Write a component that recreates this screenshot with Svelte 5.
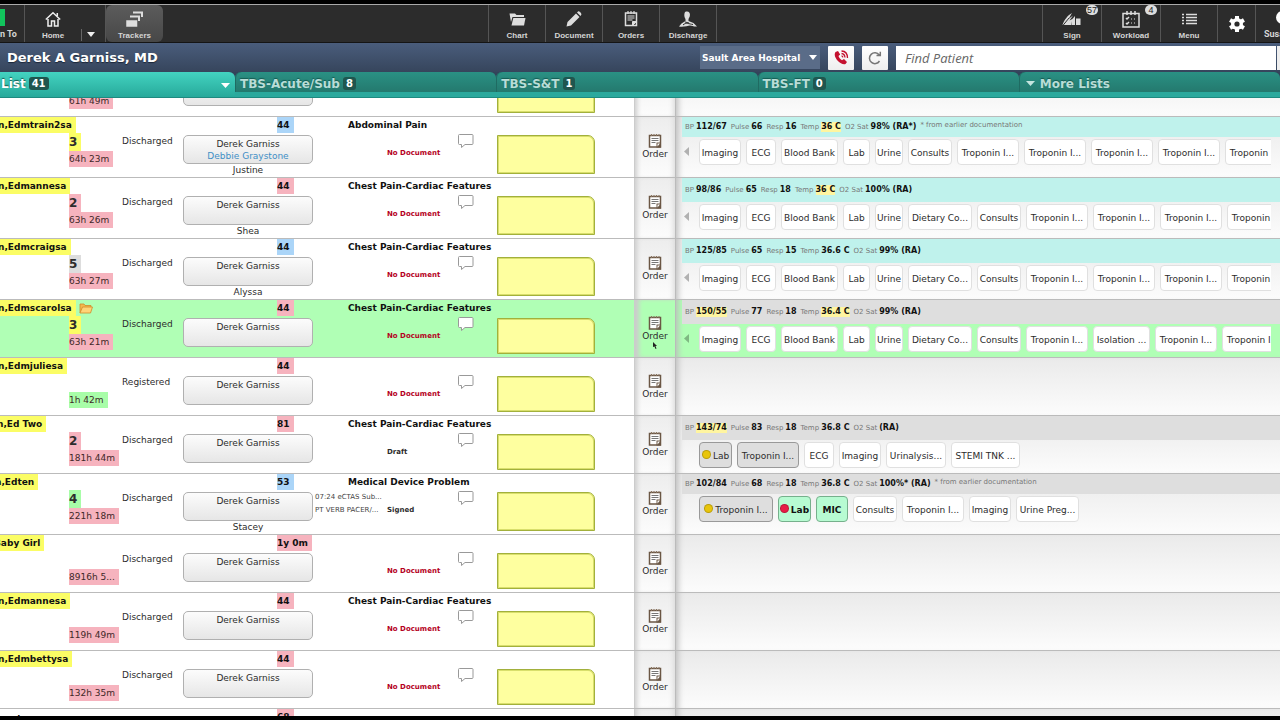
<script lang="ts">
  const widths: Record<string, number> = {
    'Imaging': 42, 'ECG': 30, 'Blood Bank': 57, 'Lab': 27, 'Urine': 28, 'Consults': 44,
    'Troponin I...': 62, 'Dietary Co...': 64, 'Isolation ...': 57, 'Urinalysis...': 60,
    'STEMI TNK ...': 69, 'Urine Preg...': 63, 'MIC': 32
  };
  const T = 'Troponin I...';
  const chipList = (names: string[]) => names.map((label) => ({ label, kind: '', dot: '' }));
  const base = ['Imaging', 'ECG', 'Blood Bank', 'Lab', 'Urine'];
  const standard = [...base, 'Dietary Co...', 'Consults', T, T, T, T];
  const vit = (bp: string, pulse: string, resp: string, temp: string, sat: string, hot: string[] = []) => [
    { k: 'BP', v: bp, hot: hot.includes('BP') },
    { k: 'Pulse', v: pulse, hot: false },
    { k: 'Resp', v: resp, hot: false },
    { k: 'Temp', v: temp, hot: hot.includes('Temp') },
    { k: 'O2 Sat', v: sat, hot: false }
  ];
  const blank = {
    name: '', cut: 2, plain: false, folder: false, esi: '', esiTone: '', time: '', timeTone: 'pink', status: 'Discharged',
    age: '44', ageTone: 'pink', second: '', nurse: '', complaint: '', notes: [] as string[], doc: 'No Document',
    vitals: [] as any[], band: '', earlier: false, chips: [] as any[], scroll: false, selected: false
  };
  const cardiac = 'Chest Pain-Cardiac Features';
  const rows = [
    { ...blank, name: 'n,Edmsa', time: '61h 49m' },
    { ...blank, name: 'n,Edmtrain2sa', esi: '3', esiTone: 'yellow', time: '64h 23m', ageTone: 'blue', second: 'Debbie Graystone', nurse: 'Justine',
      complaint: 'Abdominal Pain', vitals: vit('112/67', '66', '16', '36 C', '98% (RA*)', ['Temp']), band: 'aqua', earlier: true, scroll: true,
      chips: chipList([...base, 'Consults', T, T, T, T, T]) },
    { ...blank, name: 'n,Edmannesa', esi: '2', esiTone: 'pink', time: '63h 26m', nurse: 'Shea', complaint: cardiac,
      vitals: vit('98/86', '65', '18', '36 C', '100% (RA)', ['Temp']), band: 'aqua', scroll: true, chips: chipList(standard) },
    { ...blank, name: 'n,Edmcraigsa', esi: '5', esiTone: 'grey', time: '63h 27m', ageTone: 'blue', nurse: 'Alyssa', complaint: cardiac,
      vitals: vit('125/85', '65', '15', '36.6 C', '99% (RA)'), band: 'aqua', scroll: true, chips: chipList(standard) },
    { ...blank, name: 'n,Edmscarolsa', folder: true, esi: '3', esiTone: 'yellow', time: '63h 21m', complaint: cardiac, selected: true,
      vitals: vit('150/55', '77', '18', '36.4 C', '99% (RA)', ['BP', 'Temp']), band: 'silver', scroll: true,
      chips: chipList([...base, 'Dietary Co...', 'Consults', T, 'Isolation ...', T, T]) },
    { ...blank, name: 'n,Edmjuliesa', time: '1h 42m', timeTone: 'green', status: 'Registered' },
    { ...blank, name: 'n,Ed Two', cut: 3, esi: '2', esiTone: 'pink', time: '181h 44m', age: '81', complaint: cardiac, doc: 'Draft',
      vitals: vit('143/74', '83', '18', '36.8 C', '(RA)', ['BP']), band: 'silver',
      chips: [{ label: 'Lab', kind: 'held', dot: 'gold' }, { label: T, kind: 'held', dot: '' }, ...chipList(['ECG', 'Imaging', 'Urinalysis...', 'STEMI TNK ...'])] },
    { ...blank, name: 'n,Edten', cut: 5, esi: '4', esiTone: 'green', time: '221h 18m', age: '53', ageTone: 'blue', nurse: 'Stacey',
      complaint: 'Medical Device Problem', notes: ['07:24 eCTAS Sub...', 'PT VERB PACER/...'], doc: 'Signed',
      vitals: vit('102/84', '68', '18', '36.8 C', '100%* (RA)'), band: 'silver', earlier: true,
      chips: [{ label: T, kind: 'held', dot: 'gold' }, { label: 'Lab', kind: 'done', dot: 'red' }, { label: 'MIC', kind: 'done', dot: '' },
        ...chipList(['Consults', T, 'Imaging', 'Urine Preg...'])] },
    { ...blank, name: 'Baby Girl', cut: 6, time: '8916h 5...', age: '1y 0m' },
    { ...blank, name: 'n,Edmannesa', time: '119h 49m', complaint: cardiac },
    { ...blank, name: 'n,Edmbettysa', time: '132h 35m' },
    { ...blank, name: 'm,ni', plain: true, age: '68' }
  ];
  const chipWidth = (c: { label: string; dot: string }) => widths[c.label] + (c.dot ? (c.label === 'Lab' ? 6 : 12) : 0);
  const tabs = [
    { label: 'TBS-Acute/Sub', count: '8' },
    { label: 'TBS-S&T', count: '1' },
    { label: 'TBS-FT', count: '0' }
  ];
</script>

<div class="app">
  <header class="toolbar">
    <div class="group">
      <button class="tool edge"><i class="flag"></i><span>n To</span></button>
      <button class="tool home">
        <svg width="16" height="16" viewBox="0 0 16 16" fill="none" stroke="#eee" stroke-width="1.5"><path d="M.8 8.500 8 1.800l7.200 6.700M3 8v7h3.500v-5h3v5H13V8M12.300 5V2"/></svg>
        <span>Home</span>
      </button>
      <button class="caret-tool" aria-label="Home options"><svg width="8" height="5" viewBox="0 0 8 5"><path d="M0 0h8L4 5z" fill="#eee"/></svg></button>
      <button class="tool current">
        <svg width="17" height="16" viewBox="0 0 17 16" fill="none" stroke="#ddd" stroke-width="2"><path d="M7 1.5h9V6M4 5.5h9V10" /><path d="M1 10h9.500v5H1z" fill="#ddd" stroke-width="1.500"/></svg>
        <span>Trackers</span>
      </button>
    </div>
    <div class="group center">
      <button class="tool">
        <svg width="17" height="16" viewBox="0 0 16 16" fill="#ddd"><path d="M0 2.500h5.500L7 4h7.500v2H3L1.500 11z"/><path d="M3.800 7H16l-1.500 7.500H2z"/></svg>
        <span>Chart</span>
      </button>
      <button class="tool">
        <svg width="16" height="16" viewBox="0 0 16 16" fill="#ddd"><path d="M.5 15.500l1-4.500L10 2.500 13.500 6 5 14.500zM11 1.500l1-1c1-.8 4 2 3.300 3.200L14.500 5z"/></svg>
        <span>Document</span>
      </button>
      <button class="tool">
        <svg width="14" height="16" viewBox="0 0 14 16" fill="none" stroke="#ddd"><path d="M1.500 2h11v12.500h-11z" stroke-width="1.500"/><path d="M3.500 5h7M3.500 7h7M3.500 9h5M4 0v3M7 0v3M10 0v3" stroke-width="1.200"/><path d="M8.500 14.500v-4h4z" fill="#ddd"/></svg>
        <span>Orders</span>
      </button>
      <button class="tool">
        <svg width="18" height="17" viewBox="0 0 18 17" fill="#ddd"><path d="M6 1c5-2 6 3 4 6L9.500 8v2l5 2 3.500 3.500c-3 .5-5-1-7-1s-7 2-11 1l2.500-3L6.500 10V8C5 6 5 3 6 1z"/><path d="M4 14c3-3 6-1 10-.5M6 11l4 1" stroke="#2c2c2c" fill="none"/></svg>
        <span>Discharge</span>
      </button>
    </div>
    <div class="group right">
      <button class="tool wide">
        <svg width="20" height="16" viewBox="0 0 20 16"><path d="M.5 14C2 9 6 4 10 2L6.500 8 11 4.500 7.500 9.500l3-1.500L9 14H2z" fill="#ddd"/><path d="M.5 15 7 7" stroke="#2c2c2c"/><path d="M9.500 9 13 5v9H9.500zM14 7.500h4.500V14H14z" fill="#ddd"/></svg>
        <span>Sign</span><b class="bubble">57</b>
      </button>
      <button class="tool wide">
        <svg width="18" height="17" viewBox="0 0 18 17" fill="none" stroke="#ddd" stroke-width="1.500"><path d="M1 2.500h16V16H1zM5 0v4M9 0v4M13 0v4"/><path d="M4 7l1 1 2-2M4 12l1 1 2-2"/><path d="M9 8h1M12 8h1M9 12h1M12 12h1" stroke-width="1"/></svg>
        <span>Workload</span><b class="bubble">4</b>
      </button>
      <button class="tool">
        <svg width="15" height="15" viewBox="0 0 15 15" stroke="#ddd" stroke-width="1.500"><path d="M4 3.500h11M4 6.500h11M4 9.500h11M4 12.500h11M0 3.500h2M0 6.500h2M0 9.500h2M0 12.500h2"/></svg>
        <span>Menu</span>
      </button>
      <button class="tool gear" aria-label="Settings">
        <svg width="16" height="16" viewBox="0 0 16 16"><g fill="#fff"><circle cx="8" cy="8" r="6"/><path d="M6 0h4v16H6z"/><path d="M6 0h4v16H6z" transform="rotate(60 8 8)"/><path d="M6 0h4v16H6z" transform="rotate(-60 8 8)"/></g><circle cx="8" cy="8" r="2.600" fill="#2c2c2c"/></svg>
      </button>
      <button class="tool last"><svg width="13" height="13" viewBox="0 0 13 13"><circle cx="6.500" cy="6.500" r="6.500" fill="#fff"/></svg><span>Susan</span></button>
    </div>
  </header>

  <div class="bar">
    <h1>Derek A Garniss, MD</h1>
    <div class="site">
      <select aria-label="Facility"><option>Sault Area Hospital</option></select>
      <svg width="8" height="5" viewBox="0 0 8 5"><path d="M0 0h8L4 5z" fill="#fff"/></svg>
    </div>
    <button class="square" aria-label="Call">
      <svg width="15" height="15" viewBox="0 0 15 15"><path d="M1.500 2 4 1l2.200 3.500L4.500 6c.5 1.500 2 3.500 3.500 4.300l2-1.300 3 3-1.500 2C7 16-2 7 1.500 2z" fill="#c4112f"/><path d="M7.500 3.500c2 .2 3.300 1.500 3.500 4M7.500 1c3.500.2 6 2.500 6 7M7.500 5.800c.9.100 1.300.6 1.400 1.600" fill="none" stroke="#c4112f" stroke-width="1.300"/></svg>
    </button>
    <button class="square" aria-label="Refresh">
      <svg width="14" height="14" viewBox="0 0 14 14" fill="none" stroke="#777" stroke-width="1.500"><path d="M11.500 10a5.400 5.400 0 1 1-.3-6M12.300.8V4.500H8.500"/></svg>
    </button>
    <input class="find" type="text" placeholder="Find Patient" aria-label="Find Patient" />
    <i class="stub"></i>
  </div>

  <nav class="tabs">
    <button class="tab active"><span>List</span><b>41</b><svg width="9" height="5" viewBox="0 0 9 5"><path d="M0 0h9L4.500 5z" fill="#fff"/></svg></button>
    {#each tabs as tab}
      <button class="tab"><span>{tab.label}</span><b>{tab.count}</b></button>
    {/each}
    <button class="tab more"><svg width="9" height="5" viewBox="0 0 9 5"><path d="M0 0h9L4.500 5z" fill="#c5e5df"/></svg><span>More Lists</span></button>
  </nav>

  <main class="list">
    <div class="rows">
      {#each rows as r}
        <section class="row" class:selected={r.selected}>
          <div class="info">
            <div class="patient">
              <div class="nameline">
                <span class="name" class:plain={r.plain} style="margin-left: {-r.cut}px">{r.name}</span>
                {#if r.folder}
                  <svg width="14" height="12" viewBox="0 0 14 12" stroke="#d08a2a" stroke-width=".8"><path d="M1 11V2h4l1 1.500h6V5" fill="#f5b94d"/><path d="M1 11 3.500 5H13.500L11.500 11z" fill="#ffd477"/></svg>
                {/if}
              </div>
              <div class="esi">{#if r.esi}<span class={r.esiTone}>{r.esi}</span>{/if}</div>
              {#if r.time}<div class="time"><span class={r.timeTone}>{r.time}</span></div>{/if}
            </div>
            <div class="status">{r.status}</div>
            <div class="provider">
              <div class="age"><span class={r.ageTone}>{r.age}</span></div>
              <button class="doctor"><span>Derek Garniss</span>{#if r.second}<span class="second">{r.second}</span>{/if}</button>
              {#if r.nurse}<div class="nurse">{r.nurse}</div>{/if}
            </div>
            <div class="problem">
              <div class="complaint">{r.complaint}</div>
              <div class="docs">
                <div class="notes">{#each r.notes as n}<div>{n}</div>{/each}</div>
                <div class="doc" class:missing={r.doc === 'No Document'}>{r.doc}</div>
                <svg width="16" height="14" viewBox="0 0 16 14" fill="#fff" stroke="#999"><path d="M1.500.5h12.500q1 0 1 1v8q0 1-1 1H7L3.500 13.500V10.500H1.500q-1 0-1-1v-8q0-1 1-1z"/></svg>
              </div>
            </div>
            <div class="sticky"></div>
          </div>
          <button class="order">
            <svg width="14" height="14" viewBox="0 0 14 14"><path d="M1.500 1.500h11v11.500h-11z" fill="#fff" stroke="#6b5745" stroke-width="1.500"/><path d="M13 8.500H8.500V13.500H13z" fill="#6b5745"/><path d="M9.500 9.500h2.500l-2.500 3z" fill="#fff"/><path d="M3.500 4.500h7M3.500 6.500h7M3.500 8.500h4" stroke="#777"/><path d="M3.500 0v2M6 0v2M8.500 0v2M11 0v2" stroke="#8a7560"/></svg>
            <span>Order</span>
            {#if r.selected}<svg class="pointer" width="4" height="7" viewBox="0 0 4 7"><path d="M0 0l4 4H2.500l1 2.500-1 .5-1-2.500L0 5z" fill="#222"/></svg>{/if}
          </button>
          <div class="results">
            {#if r.vitals.length}
              <div class="vitals {r.band}" class:short={r.earlier}>
                {#each r.vitals as v}<span class="vital">{v.k} <b class:hot={v.hot}>{v.v}</b></span>{/each}
                {#if r.earlier}<small>* from earlier documentation</small>{/if}
              </div>
              <div class="strip">
                <div class="arrow">{#if r.scroll}<svg width="5" height="9" viewBox="0 0 5 9"><path d="M5 0v9L0 4.500z" fill="#000" opacity=".28"/></svg>{/if}</div>
                <div class="chips">
                  {#each r.chips as c}
                    <button class="chip {c.kind}" style="width: {chipWidth(c)}px">{#if c.dot}<i class={c.dot}></i>{/if}{c.label}</button>
                  {/each}
                </div>
              </div>
            {/if}
          </div>
        </section>
      {/each}
    </div>
  </main>
</div>

<style>
  :global(body) { background: #000; overflow: hidden; }
  * { box-sizing: border-box; }
  button, input, select { font: inherit; color: inherit; margin: 0; padding: 0; border: 0; background: none; }
  svg { display: block; flex: none; }
  .app {
    height: 100vh; display: flex; flex-direction: column; padding: 4px 0;
    font: 9px/12px "DejaVu Sans", sans-serif; color: #2c2c2c;
  }

  .toolbar {
    flex: none; height: 39px; display: flex; justify-content: space-between;
    background: #2c2c2c; border-top: 1px solid #aaa; border-bottom: 1px solid #151515;
    font: bold 8px/10px "Liberation Sans", sans-serif; color: #d5d5d5;
  }
  .group { display: flex; }
  .tool {
    position: relative; width: 57px; padding: 6px 0 1px; border-right: 1px solid #555;
    display: flex; flex-direction: column; align-items: center; justify-content: space-between;
  }
  .center { border-left: 1px solid #555; }
  .right { border-left: 1px solid #555; }
  .edge { width: 25px; align-items: flex-start; padding: 4px 0 3px; font: bold 9px/10px Roboto, sans-serif; }
  .flag { width: 5px; height: 17px; background: #12c45c; }
  .home { width: 56px; border: 0; }
  .caret-tool { width: 25px; border-right: 1px solid #555; display: flex; align-items: flex-end; padding: 0 0 5px 6px; position: relative; }
  .caret-tool::before { content: ""; position: absolute; left: 0; top: 24px; height: 12px; width: 1px; background: #666; }
  .current { border: 0; border-radius: 6px; background: linear-gradient(#5c5c5c, #474747); }
  .wide { width: 59px; }
  .gear { width: 38px; justify-content: center; padding: 0; }
  .last { width: 24px; border: 0; overflow: hidden; align-items: flex-start; padding: 6px 0 3px 8px; font: bold 9px/10px Roboto, sans-serif; }
  .last svg { margin-left: 12px; }
  .bubble {
    position: absolute; top: 0; right: 3px; min-width: 12px; height: 10px; border-radius: 5px;
    background: #ddd; color: #222; font-size: 9px; line-height: 10px; text-align: center; font-weight: normal;
  }

  .bar { flex: none; height: 29px; display: flex; align-items: center; background: linear-gradient(#4a5d7c, #36455c); }
  h1 { margin: 0 auto 0 7px; font-size: 13px; line-height: 18px; color: #fff; text-shadow: 0 1px 1px #1c2738; }
  .site { position: relative; display: flex; align-items: center; background: #5a6c88; height: 23px; width: 120px; }
  .site select { appearance: none; width: 100%; height: 100%; padding-left: 2px; font-weight: bold; color: #fff; }
  .site svg { position: absolute; right: 3px; pointer-events: none; }
  .square {
    width: 26px; height: 24px; margin-left: 8px; background: linear-gradient(#fff, #eee); border-radius: 1px;
    display: flex; align-items: center; justify-content: center;
  }
  .find { flex: 0 0 380px; height: 24px; margin-left: 8px; padding-left: 9px; background: #fff; font-family: "Open Sans", sans-serif; font-size: 13px; font-style: italic; }
  .find::placeholder { color: #666; opacity: 1; }
  .stub { width: 3px; height: 24px; margin-left: 1px; background: #eee; }

  .tabs { flex: none; height: 26px; display: flex; background: #33435a; border-bottom: 1px solid #1e8a80; box-shadow: inset 0 -5px #2ba99d; }
  .tab {
    flex: 1; height: 20px; display: flex; align-items: center; padding: 3px 5px 0; gap: 3px;
    font-size: 12px; line-height: 16px; font-weight: bold; color: #b9ddd7; text-shadow: 0 -1px 1px #145b53;
    background: linear-gradient(#2a9184, #24796e); border-radius: 6px 6px 0 0; box-shadow: inset 1px 0 #1f6b62;
  }
  .tab.active { flex: 0 0 235px; height: 25px; padding: 0 5px 2px 1px; color: #fff; background: linear-gradient(#43d3c0, #27a99b); border-radius: 0 6px 0 0; box-shadow: none; }
  .tab.active svg { margin: 4px 0 0 auto; }
  .tab b { padding: 0 3px; line-height: 13px; font-size: 10px; color: #fff; background: #20564f; border-radius: 3px; }
  .more svg { margin: 0 2px; }

  .list { flex: 1; min-height: 0; overflow: hidden; background: #fff; }
  .rows { margin-top: -40px; }
  .row { display: grid; grid-template-columns: 634px 42px 1fr; min-height: 58px; border-top: 1px solid #bbb; background: #fff; }
  .info { display: grid; grid-template-columns: 122px 61px 130px 184px 98px; min-width: 0; }
  .selected .info { background: #b0ffb5; }
  .pink { background: #f6b3be; }
  .blue { background: #abd5f8; }
  .green { background: #a8fda8; }
  .yellow { background: #fbfd65; }
  .grey { background: #ddd; }
  .patient { overflow: hidden; }
  .nameline { display: flex; align-items: center; gap: 3px; height: 16px; font-weight: bold; color: #111; white-space: nowrap; }
  .name { background: #fbfd65; line-height: 16px; padding-right: 4px; }
  .name.plain { background: none; padding-top: 4px; }
  .esi, .time { padding-left: 69px; white-space: nowrap; }
  .esi { height: 18px; font-size: 12px; line-height: 18px; font-weight: bold; }
  .esi span { display: inline-block; padding-right: 4px; }
  .time { color: #402828; }
  .time span { display: inline-block; line-height: 16px; padding-right: 4px; }
  .status { padding-top: 18px; }
  .provider { padding-bottom: 1px; }
  .age { height: 16px; padding-left: 94px; margin-bottom: 2px; font-weight: bold; color: #111; white-space: nowrap; }
  .age span { display: inline-block; line-height: 16px; padding-right: 4px; }
  .doctor {
    display: flex; flex-direction: column; align-items: center; justify-content: flex-start; width: 130px; height: 29px; padding-top: 2px;
    border: 1px solid #b0b0b0; border-radius: 5px; background: linear-gradient(#fcfcfc, #e6e6e6);
  }
  .second { color: #3f8fc6; }
  .nurse { text-align: center; }
  .complaint { height: 17px; line-height: 17px; padding-left: 35px; font-weight: bold; color: #111; white-space: nowrap; }
  .docs { display: flex; font-size: 7px; line-height: 13px; }
  .notes { width: 74px; padding-left: 2px; white-space: nowrap; color: #444; }
  .doc { width: 71px; padding-top: 13px; font-weight: bold; white-space: nowrap; }
  .missing { color: #b50022; }
  .sticky { margin: 18px 0 3px; background: #feff9f; border: 1px solid #a2b03c; box-shadow: inset 0 0 0 1px #d9df6c; border-radius: 0 7px 0 0; }

  .order {
    position: relative; display: flex; flex-direction: column; align-items: center; justify-content: center; gap: 0;
    border-left: 1px solid #ccc; border-right: 1px solid #bbb;
    background: linear-gradient(#ededed, #fcfcfc); box-shadow: inset 5px 0 5px -3px #ccc, inset -5px 0 5px -3px #ddd;
  }
  .selected .order { background: #b0ffb5; box-shadow: inset 5px 0 4px -1px #ccc; }
  .pointer { position: absolute; left: 18px; bottom: 8px; }
  .results { min-width: 0; padding-left: 6px; background: linear-gradient(#eaeaea, #fcfcfc); box-shadow: inset 7px 0 6px -5px #bbb; }
  .selected .results { background: #b0ffb5; }
  .vitals {
    display: flex; align-items: center; gap: 4px; height: 24px; padding-left: 3px; font-size: 7px; line-height: 10px;
    color: #777; white-space: nowrap;
  }
  .short { height: 20px; }
  .vital { display: flex; gap: 2px; }
  .vitals b { font-size: 8px; color: #111; }
  .vitals b.hot { background: #fff5a0; }
  .vitals small { font-size: 7px; align-self: flex-start; padding-top: 3px; }
  .aqua { background: #bff2ec; }
  .silver { background: #dedede; }
  .strip { display: flex; margin-right: 9px; padding-top: 2px; }
  .arrow { flex: none; width: 17px; padding: 8px 0 0 2px; }
  .chips { display: flex; gap: 5px; min-width: 0; overflow: hidden; }
  .chip {
    flex: none; display: flex; align-items: center; justify-content: center; gap: 2px; height: 26px; padding-top: 1px;
    border: 1px solid #e0e0e0; border-radius: 4px; background: #fff; white-space: nowrap;
  }
  .held { background: #dedede; border-color: #999; }
  .done { background: #b7fbd2; border-color: #76b08c; font-weight: bold; color: #111; }
  .chip i { width: 9px; height: 9px; border-radius: 50%; border: 1px solid #0003; margin-bottom: 3px; }
  .gold { background: #e8c50c; }
  .red { background: #e81c46; }
</style>
